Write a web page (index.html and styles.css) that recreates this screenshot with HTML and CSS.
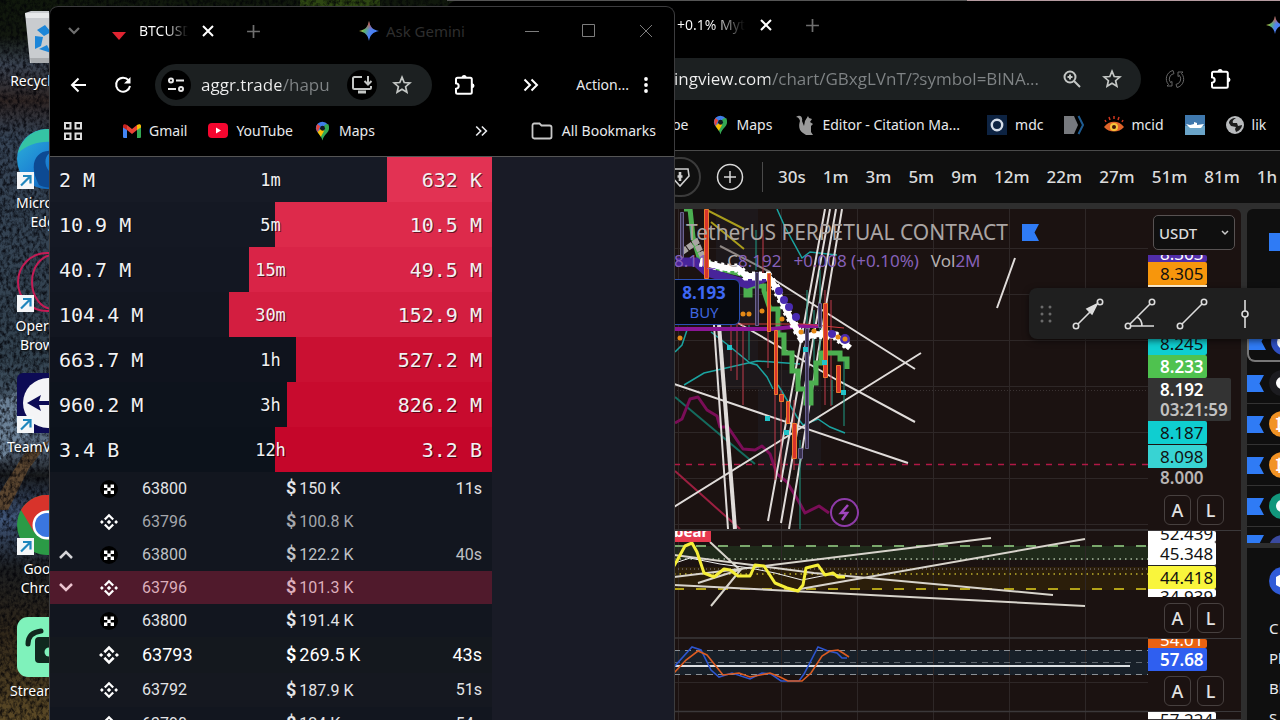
FILE: index.html
```html
<!DOCTYPE html>
<html lang="en">
<head>
<meta charset="utf-8">
<title>Desktop</title>
<link rel="stylesheet" href="styles.css">
</head>
<body>
<svg class="defs" aria-hidden="true">
  <defs>
    <linearGradient id="spark" x1="0" y1="0.3" x2="1" y2="0.6"><stop offset="0" stop-color="#f2c230"/><stop offset=".3" stop-color="#5cb46a"/><stop offset=".55" stop-color="#4f82f0"/><stop offset="1" stop-color="#3f7bf5"/></linearGradient>
    <linearGradient id="sparktop" x1="0" y1="0" x2="0" y2="1"><stop offset="0" stop-color="#f0453a"/><stop offset=".45" stop-color="#f0453a" stop-opacity="0"/></linearGradient>
    <linearGradient id="edge" x1="0" y1="0" x2="1" y2="1"><stop offset="0" stop-color="#2fb6d8"/><stop offset=".5" stop-color="#1c82d4"/><stop offset="1" stop-color="#0c4f9e"/></linearGradient>
    <symbol id="i-close" viewBox="0 0 14 14"><path d="M2 2l10 10M12 2L2 12" fill="none" stroke="currentColor" stroke-width="2"/></symbol>
    <symbol id="i-plus" viewBox="0 0 14 14"><path d="M7 1v12M1 7h12" fill="none" stroke="currentColor" stroke-width="1.600"/></symbol>
    <symbol id="i-more" viewBox="0 0 16 14"><path d="M1.500 1.500l5.500 5.500-5.500 5.500M8.500 1.500l5.500 5.500-5.500 5.500" fill="none" stroke="currentColor" stroke-width="2"/></symbol>
    <symbol id="i-star" viewBox="0 0 20 20"><path d="M10 2.200l2.200 5.300 5.700.5-4.300 3.700 1.300 5.600L10 14.300l-4.900 3 1.300-5.600L2.100 8l5.700-.5z" fill="none" stroke="currentColor" stroke-width="1.700"/></symbol>
    <symbol id="i-puzzle" viewBox="0 0 22 22"><path d="M2 5.200c0-1 .7-1.500 1.500-1.500H16.300c1 0 1.500.6 1.500 1.500V18.300c0 1-.6 1.500-1.500 1.500H3.500c-1 0-1.500-.6-1.500-1.500v-3.500c3.600-.5 3.600-5 0-5.500z" fill="none" stroke="currentColor" stroke-width="2"/><path d="M7.600 3.500a2.500 2.500 0 0 1 5 0zM18 9.200a2.500 2.500 0 0 1 0 5z" fill="currentColor"/></symbol>
    <symbol id="i-spark" viewBox="0 0 20 20"><path d="M10 0c1 6 4 9 10 10-6 1-9 4-10 10C9 14 6 11 0 10 6 9 9 6 10 0z" fill="url(#spark)"/><path d="M10 0c1 6 4 9 10 10-6 1-9 4-10 10C9 14 6 11 0 10 6 9 9 6 10 0z" fill="url(#sparktop)"/></symbol>
    <symbol id="i-maps" viewBox="0 0 16 20"><path d="M8 0a7 7 0 0 1 5.500 2.700L3 11.500A8 8 0 0 1 1 7 7 7 0 0 1 8 0z" fill="#3f7de8"/><path d="M2.600 2.500l3 2.500-2.900 6A8 8 0 0 1 2.600 2.500z" fill="#e8453a"/><path d="M3 11.500l8-8.500 3-.5a7 7 0 0 1 1 4.500c0 5-5.500 6-7 13-1-4-3-5.500-5-8.500z" fill="#34a853"/><path d="M2.700 11l4-4 3 3-3.500 6z" fill="#fbbc04"/><circle cx="8" cy="7" r="2.600" fill="#101820"/></symbol>
    <symbol id="i-short" viewBox="0 0 17 17"><path d="M0 0h17v17H0z" fill="#f4f6f8"/><path d="M4 13.500L12.500 5M6 4h7.500v7.500" fill="none" stroke="#1f86bd" stroke-width="2.200"/></symbol>
    <symbol id="i-okx" viewBox="0 0 18 18"><circle cx="9" cy="9" r="9" fill="#000"/><path d="M4 4.500h3.400v3.400H4zM10.600 4.500H14v3.400h-3.400zM7.300 7.500h3.400v3.400H7.300zM4 10.500h3.400v3.400H4zM10.600 10.500H14v3.400h-3.400z" fill="#fff"/></symbol>
    <symbol id="i-bnb" viewBox="0 0 18 18"><g fill="none" stroke="#fff" stroke-width="2.300"><path d="M4.800 6.500L9 2.300l4.200 4.200M4.800 11.500L9 15.700l4.200-4.200"/></g><path d="M9 6.800L11.200 9 9 11.200 6.800 9zM1.900 7.100L3.800 9l-1.900 1.900L0 9zM16.100 7.100L18 9l-1.900 1.900L14.200 9z" fill="#fff"/></symbol>
    <symbol id="i-flag" viewBox="0 0 17 17"><path d="M0 0h17l-4.500 8.500L17 17H0z" fill="#2f7bf5"/></symbol>
  </defs>
</svg>

<main class="desktop">
  <svg class="wallpaper" viewBox="0 0 1280 720" preserveAspectRatio="xMinYMin slice" aria-hidden="true">
    <defs>
      <linearGradient id="rock" x1="0" y1="0" x2="0" y2="1"><stop offset="0" stop-color="#10180c"/><stop offset=".05" stop-color="#12180f"/><stop offset=".09" stop-color="#3a4351"/><stop offset=".14" stop-color="#2e2422"/><stop offset=".19" stop-color="#364456"/><stop offset=".5" stop-color="#32424f"/><stop offset=".62" stop-color="#5f7288"/><stop offset=".66" stop-color="#181a1c"/><stop offset=".72" stop-color="#40567a"/><stop offset=".79" stop-color="#1c1e20"/><stop offset=".88" stop-color="#30271a"/><stop offset="1" stop-color="#5c4a26"/></linearGradient>
      <filter id="grain" x="0" y="0" width="100%" height="100%" color-interpolation-filters="sRGB"><feTurbulence type="fractalNoise" baseFrequency=".3 .22" numOctaves="4" seed="8"/><feColorMatrix values="0 0 0 0 0  0 0 0 0 0  0 0 0 0 0.020  2.400 0 0 0 -.9"/></filter>
    </defs>
    <path d="M0 0h700v720H0z" fill="url(#rock)"/>
    <path d="M300 0h80v8h-80z" fill="#2e4712"/>
    <path d="M0 400l50-25v40L0 460z" fill="#6c8298"/><path d="M50 440L28 470 8 510H0v-18l24-38z" fill="#5b4630"/>
    <path d="M0 0h700v720H0z" filter="url(#grain)" opacity=".75"/>
    <path d="M447 0h520v1H447z" fill="#555"/><path d="M967 0h313v1H967z" fill="#b59ba0"/>
  </svg>

  <section class="icons" aria-label="Desktop icons">
    <figure class="dicon bin"><svg width="60" height="60" viewBox="0 0 60 60"><path d="M8 3l6-2h36l2 2-6 50H13z" fill="#c9cccf"/><path d="M8 3h44l-1 5H9z" fill="#e7e9ea"/><path d="M13 48h33l-1 5H14z" fill="#a9acaf"/><path d="M20 20l8-5 6 7-7 4zM18 26l8 1-2 9-6 3zM22 39l8-4 4 8z" fill="#1d86d8"/></svg><figcaption>Recycle Bin</figcaption></figure>
    <figure class="dicon edge"><svg width="60" height="60" viewBox="0 0 60 60"><circle cx="30" cy="30" r="30" fill="url(#edge)"/><path d="M1 24C6 6 20 0 32 0c14 0 28 10 28 24-10-12-40-18-59 0z" fill="#35c3a4"/><path d="M22 56C10 34 20 20 36 22c-14 6-8 26 14 30-8 8-20 8-28 4z" fill="#0d4a93"/><use href="#i-short" y="43" width="17" height="17"/></svg><figcaption>Microsoft<br>Edge</figcaption></figure>
    <figure class="dicon opera"><svg width="60" height="60" viewBox="0 0 60 60"><g fill="none" stroke="#c41c55" stroke-width="2"><circle cx="30" cy="30" r="29"/><ellipse cx="36" cy="30" rx="21" ry="27"/></g><use href="#i-short" y="43" width="17" height="17"/></svg><figcaption>Opera GX<br>Browser</figcaption></figure>
    <figure class="dicon team"><svg width="60" height="60" viewBox="0 0 60 60"><rect width="60" height="60" rx="6" fill="#0d0b55"/><circle cx="31" cy="30" r="25" fill="#f4f4f6"/><path d="M10 30l14-8-2 6h18v4H22l2 6z" fill="#0d0b55"/><use href="#i-short" y="43" width="17" height="17"/></svg><figcaption>TeamViewer</figcaption></figure>
    <figure class="dicon chrome"><svg width="60" height="60" viewBox="0 0 60 60"><circle cx="30" cy="30" r="30" fill="#2b9a46"/><path d="M4 15A30 30 0 0 1 56 15H30L17 37z" fill="#d8332b"/><circle cx="30" cy="30" r="14.500" fill="#fff"/><circle cx="30" cy="30" r="12" fill="#3a76e0"/><use href="#i-short" y="43" width="17" height="17"/></svg><figcaption>Google<br>Chrome</figcaption></figure>
    <figure class="dicon stream"><svg width="60" height="60" viewBox="0 0 60 60"><rect width="60" height="60" rx="11" fill="#7ff2bb"/><path d="M11 27c0-8 5-12 13-13" fill="none" stroke="#10281f" stroke-width="5" stroke-linecap="round"/><rect x="18" y="20" width="34" height="26" rx="4" fill="#10281f"/><circle cx="32" cy="35" r="4.500" fill="#7ff2bb"/></svg><figcaption>Streamlabs</figcaption></figure>
  </section>

  <section class="win back" aria-label="Chart window">
    <header class="tabs">
      <div class="tab"><span class="tab-title">+0.1% Myt</span><button class="tbtn close" aria-label="Close tab"><svg width="14" height="14"><use href="#i-close"/></svg></button></div>
      <button class="tbtn new" aria-label="New tab"><svg width="15" height="15"><use href="#i-plus"/></svg></button>
      <span class="grow"></span>
      <svg class="edge-spark" width="18" height="18"><use href="#i-spark"/></svg>
    </header>
    <nav class="bar">
      <div class="pill">
        <input class="url long" aria-label="Address" value="ingview.com/chart/GBxgLVnT/?symbol=BINA...">
        <button class="ic" aria-label="Zoom"><svg width="20" height="20" viewBox="0 0 20 20" fill="none" stroke="#c4c7c5" stroke-width="2"><circle cx="8" cy="8" r="5.500"/><path d="M12 12l6 6M5.500 8h5M8 5.500v5"/></svg></button>
        <button class="ic" aria-label="Bookmark"><svg width="20" height="20"><use href="#i-star"/></svg></button>
      </div>
      <button class="xbtn dim" aria-label="Extension"><svg width="20" height="20" viewBox="0 0 20 20" fill="none" stroke="#666" stroke-width="1"><path d="M8 1.500A8.500 8.500 0 0 0 3.500 15.500L2 17h5v-4.500l-1.500 1A5.500 5.500 0 0 1 9 4.600zM12 18.500A8.500 8.500 0 0 0 16.500 4.500L18 3h-5v4.500l1.500-1A5.500 5.500 0 0 1 11 15.400z"/></svg></button>
      <button class="xbtn" aria-label="Extensions"><svg width="22" height="22"><use href="#i-puzzle"/></svg></button>
      <span class="tail"></span>
    </nav>
    <nav class="marks">
      <a href="#" class="mark m-be">be</a>
      <a href="#" class="mark m-maps"><svg width="15" height="20"><use href="#i-maps"/></svg>Maps</a>
      <a href="#" class="mark m-ed"><svg width="18" height="20" viewBox="0 0 18 20"><path d="M0 2c4-3 7 0 6 4l2 5 1-5 3-5 1 2 3 1-2 3 3 2-2 2v6l2 3h-7l-3-2C2 15 3 9 4 6 3 3 2 2 0 2z" fill="#9a9a9a"/></svg>Editor - Citation Ma...</a>
      <a href="#" class="mark m-mdc"><svg width="20" height="20" viewBox="0 0 20 20"><path d="M0 0h20v20H0z" fill="#0d2342"/><circle cx="10" cy="10" r="5.200" fill="none" stroke="#d5dde8" stroke-width="2.400"/></svg>mdc</a>
      <a href="#" class="mark m-dx" aria-label="Bookmark"><svg width="20" height="20" viewBox="0 0 20 20"><path d="M0 1h10l4 9-4 9H0z" fill="#77797e"/><path d="M14.500 1l4.500 9-4.500 9" fill="none" stroke="#1e5b91" stroke-width="2"/></svg></a>
      <a href="#" class="mark m-mcid"><svg width="20" height="20" viewBox="0 0 20 20"><path d="M0 12c5-7 15-7 20 0-5 6-15 6-20 0z" fill="#e0642a"/><circle cx="10" cy="12" r="4" fill="#f4c53a"/><circle cx="10" cy="12" r="2" fill="#3d1208"/><path d="M2 7L1 5M6 5L5 2M10 4V1M14 5l1-3M18 7l1-2" stroke="#d0361e" stroke-width="1.500"/></svg>mcid</a>
      <a href="#" class="mark m-ship" aria-label="Bookmark"><svg width="20" height="20" viewBox="0 0 20 20"><path d="M0 0h20v20H0z" fill="#3f78ad"/><path d="M0 11h20v9H0z" fill="#6aa4c8"/><path d="M1 9l4 1 4-1V7l3 1v2l7-1-3 4H5z" fill="#fff"/></svg></a>
      <a href="#" class="mark m-lik"><svg width="18" height="18" viewBox="0 0 18 18"><circle cx="9" cy="9" r="9" fill="#b9bbbd"/><path d="M10 2c-3 2-4 3-3 5h4l1 3 4-1c0 3-3 6-6 7l-1-3 1-2-5-1-2-3C3 4 6 2 10 2z" fill="#1b1b1b"/></svg>lik</a>
    </nav>
    <div class="intervals">
      <span class="ghost"><svg width="22" height="22" viewBox="0 0 22 22" fill="none" stroke="#cfcfcf" stroke-width="1.600"><path d="M3 3h16l1 7-9 10-9-10z"/><path d="M11 6v9M8.500 10.500h5" stroke-width="2.600"/></svg></span>
      <button class="add" aria-label="Compare symbol"><svg width="28" height="28" viewBox="0 0 28 28" fill="none" stroke="#d8d8d8" stroke-width="1.500"><circle cx="14" cy="14" r="12.500"/><path d="M14 8v12M8 14h12"/></svg></button>
      <span class="rule"></span>
      <button>30s</button><button>1m</button><button>3m</button><button>5m</button><button>9m</button><button>12m</button><button>22m</button><button>27m</button><button>51m</button><button>81m</button><button>1h</button>
    </div>
    <div class="workspace">
      <div class="chart">
        <svg class="plot" viewBox="674 209 474 511" preserveAspectRatio="xMinYMin slice" role="img" aria-label="Price chart">
          <path d="M674 209h474v511H674z" fill="#1b1211"/>
          <path d="M674 546h474v14H674z" fill="#1f2a1a"/><path d="M674 567h474v23H674z" fill="#2b1e0a"/><path d="M674 650h474v25H674z" fill="#182029"/>
          <path d="M716 209v180h42V209zM758 370h63v100h-63z" fill="#22252f" opacity=".35"/>
          <path d="M678.500 209v511M781.500 209v511M857.500 209v511M933.500 209v511M1009.500 209v511M1085.500 209v511M674 248.500h474M674 294.500h474M674 340.500h474M674 386.500h474M674 432.500h474M674 478.500h474M674 524.500h474M674 682.500h474" stroke="#2e2727" fill="none"/>
          <path d="M674 390.500h474" stroke="#3a3232" stroke-dasharray="1 2"/>
          <path d="M674 464.500h474" stroke="#b01846" stroke-width="1.500" stroke-dasharray="6 6"/>
          <g fill="none" stroke="#1ba3a0" stroke-width="1.500"><path d="M777 209l8 18 17 31 8-6 27 3M675 352l7-7 6-18M711 332l17 13 22 18 7 2 10 12 6 12M684 385l20-12 53-12 43 3M778 385l9 15 10 17 6 8 15-6 12 8 15 6"/><path d="M675 397l80 67" stroke="#146b5e" stroke-width="2"/></g>
          <path d="M675 471l65 58" stroke="#9c1f40" stroke-width="2"/>
          <path d="M675 423l7-4 8-20 8-2 9 13 10 6 3 11h8l15 22 12 1 7-4 8 8 7 20 10 8 12 20 6 11 14-7 10 7" fill="none" stroke="#7a0d57" stroke-width="3" stroke-linejoin="round"/>
          <path d="M705 209l39 20M711 222l33 27" stroke="#a99d1c" stroke-width="2"/><path d="M720 246l50 26" stroke="#8d8684" stroke-width="2"/>
          <g stroke="#e0dcda" stroke-width="2" fill="none">
            <path d="M770 277l145 92M921 353L674 507M674 384l234 79M738 323l99 57 78 42M825 209l-57 312M830 209l-49 273M836 209l-55 314M842 209l-53 320M714 325l14 204M1015 258l-18 50"/>
            <path d="M719 325l16 204" stroke-width="4"/>
          </g>
          <g stroke="#c23a4d" stroke-width="1"><path d="M731 325v46M737 325v55M743 325v80M768 325v43M775 330v150M781 390v90M825 290v115M831 300v106M763 230v60M794 400v70"/></g>
          <g stroke="#1f9c86" stroke-width="1"><path d="M749 325v35M756 230v40M807 290v150M800 440v89M844 358v68M832 380v25M814 310v60M820 270v80"/></g>
          <path d="M684 209h6l3 28 6 20 20 12 27 6v20h4v-9h14v5l6 18h8v26h6v18h8v18h6v18h8v14h5v-20h5v-20h5v-10h19v6h7v10" fill="none" stroke="#4caf50" stroke-width="5"/>
          <path d="M676 262l20 0 11 10 40 12 20-7" fill="none" stroke="#48249a" stroke-width="9"/>
          <path d="M674 329h98l30-3h20" fill="none" stroke="#8a1696" stroke-width="4"/><path d="M674 324h130l40 4" stroke="#d03b3f" fill="none"/>
          <path d="M682 252l14-10 10 22" fill="none" stroke="#aaa5a4" stroke-width="6" stroke-dasharray="6 1"/>
          <path d="M700 262l26 6h12l8 8h22l8 12 10 22 12 22 4 6 14-4 20 2 14 12" fill="none" stroke="#fff" stroke-width="6" stroke-linejoin="round"/><path d="M700 262l26 6h12l8 8h22l8 12 10 22 12 22 4 6 14-4 20 2 14 12" fill="none" stroke="#fff" stroke-width="9" stroke-dasharray="3 4"/>
          <g fill="#4a2bb0"><circle cx="779" cy="291" r="4"/><circle cx="784" cy="300" r="4"/><circle cx="789" cy="307" r="4"/><circle cx="796" cy="317" r="4"/><circle cx="832" cy="334" r="4"/><circle cx="845" cy="339" r="5"/></g>
          <g fill="#e68a16"><circle cx="749" cy="314" r="2.500"/><circle cx="743" cy="314" r="2.500"/><circle cx="762" cy="311" r="2.500"/><circle cx="782" cy="319" r="2.500"/><circle cx="801" cy="332" r="2.500"/><circle cx="814" cy="331" r="2.500"/><circle cx="838" cy="337" r="2.500"/><circle cx="845" cy="339" r="2.500"/><circle cx="680" cy="338" r="2.500"/></g>
          <g fill="#d8342d" stroke="#ed7a2d"><path d="M704.500 209.500h4v69h-4zM767.500 273.500h3v58h-3zM774.500 330.500h3v64h-3zM823.500 303.500h4v74h-4zM836.500 365.500h4v27h-4zM786.500 401.500h3v22h-3zM792.500 423.500h4v35h-4zM779.500 394.500h4v7h-4z"/></g>
          <g fill="#39304f" stroke="#6a6290"><path d="M805.500 328.500h3v120h-3zM755.500 272.500h3v53h-3zM818.500 303.500h3v24h-3zM798.500 448.500h4v10h-4zM680.500 212.500h3v45h-3z"/></g>
          <path d="M727 345h5v5h-5zM803 347h5v5h-5zM822 360h5v5h-5zM765 416h5v5h-5zM784 430h5v5h-5zM841 390h5v5h-5z" fill="#22c3c9"/>
          <circle cx="844.500" cy="512.500" r="13.500" fill="#1b1211" stroke="#8e3ba8" stroke-width="2"/><path d="M848 505l-7 8h6l-5 7" fill="none" stroke="#a045bd" stroke-width="2.500"/>
          <path d="M1148 457l9 7-9 7z" fill="#d0146a"/>
          <path d="M674 546h474" stroke="#7aa86c" stroke-width="2" stroke-dasharray="10 12"/>
          <path d="M674 559h474" stroke="#a9b8a0" stroke-width="1.500" stroke-dasharray="1.500 4"/><path d="M674 569h474" stroke="#8a8292" stroke-dasharray="1 3"/><path d="M674 574h474" stroke="#bdb02c" stroke-width="1.500" stroke-dasharray="1.500 4"/>
          <path d="M674 589h474" stroke="#b3a318" stroke-width="2" stroke-dasharray="10 12"/>
          <path d="M674 555l140 18 239 22M674 585l411 21M674 577l317-39M800 589l285-50M710 542l30 28M742 568l-31 38M698 583l44-14" fill="none" stroke="#d8d4cc" stroke-width="2"/>
          <path d="M675 563l15-5 30 6 30 4 25 5 27 7 25-5" fill="none" stroke="#eee"/>
          <path d="M674 566l11-20 7-3 5 9 7 21 10 4 10-8 6 1 8 6h12l5-11 9 1 11 17 12 5 11 3 5-6 3-17 12-3 7 10 8-2 5 4h7" fill="none" stroke="#f5ee38" stroke-width="3" stroke-linejoin="round"/>
          <path d="M674 531h37v11h-37z" fill="#e6394f"/>
          <g stroke="#8a9096" stroke-dasharray="6 5"><path d="M674 650.500h474M674 674.500h474"/><path d="M674 662.500h474" stroke="#5f666d"/></g>
          <path d="M674 666h456" stroke="#dcdfe2" stroke-width="2"/>
          <path d="M674 667l18-20 9 3 10 20 8 7 13-4 18 6 12-6 9 1 10 7h18l5-7 14-27 10 4 9 2 5 5h5" fill="none" stroke="#2d55cf" stroke-width="1.600"/><path d="M674 673l12-13 12-9 9 4 16 20 16-2 11 4 20-4 10 4 8 4h14l9-8 11-17 8-5 8-1 5 3 6 4" fill="none" stroke="#dc5c22" stroke-width="1.600"/>
          <path d="M674 530h474M674 638h474M674 711.500h474" stroke="#3b383a" stroke-width="1.500"/>
        </svg>
        <div class="legend"><div class="sym">TetherUS PERPETUAL CONTRACT <svg width="17" height="17"><use href="#i-flag" width="17" height="17"/></svg></div>
          <div class="vals"><span>8.11_</span><span><b>C</b>8.192</span><span>+0.008 (+0.10%)</span><span><b>Vol</b>2M</span></div></div>
        <button class="buy"><strong>8.193</strong>BUY</button>
        <span class="bear">bear</span>
        <label class="cur"><select aria-label="Currency"><option>USDT</option></select><svg width="8" height="6" viewBox="0 0 8 6"><path d="M1 1l3 3 3-3" fill="none" stroke="#ccc" stroke-width="1.500"/></svg></label>
        <div class="scale">
          <div class="pane p1">
            <span class="tag purple cut">8.363</span><span class="tag orange">8.305</span><span class="hidden-gap"></span>
            <span class="tag teal first">8.245</span><span class="tag green">8.233</span><span class="tag now">8.192<br><i>03:21:59</i></span><span class="tag teal">8.187</span><span class="tag teal2">8.098</span><span class="plain">8.000</span>
            <div class="al"><button>A</button><button>L</button></div>
          </div>
          <div class="pane p2">
            <span class="tag white wide cut">52.439</span><span class="tag white wide tall">45.348</span><span class="tag yellow wide">44.418</span><span class="tag white wide cuttop">34.939</span>
            <div class="al"><button>A</button><button>L</button></div>
          </div>
          <div class="pane p3">
            <span class="tag dorange cut">54.01</span><span class="tag blue">57.68</span>
            <div class="al"><button>A</button><button>L</button></div>
          </div>
          <div class="pane p4"><span class="tag white wide cuttop">57.224</span></div>
        </div>
      </div>
      <aside class="side">
        <div class="head"><svg width="18" height="18"><use href="#i-flag"/></svg></div>
        <ul class="watch">
          <li class="sel"><svg width="17" height="17"><use href="#i-flag"/></svg><i class="coin c1"></i></li>
          <li><svg width="17" height="17"><use href="#i-flag"/></svg><i class="coin c2"></i></li>
          <li><svg width="17" height="17"><use href="#i-flag"/></svg><i class="coin c3">₿</i></li>
          <li><svg width="17" height="17"><use href="#i-flag"/></svg><i class="coin c3">₿</i></li>
          <li><svg width="17" height="17"><use href="#i-flag"/></svg><i class="coin c4"></i></li>
          <li class="last"><svg width="17" height="17"><use href="#i-flag"/></svg><i class="coin c5"></i></li>
        </ul>
        <div class="detail"><svg width="28" height="28" viewBox="0 0 28 28"><circle cx="14" cy="14" r="14" fill="#2f5bd8"/><path d="M14 6l7 4v8l-7 4-7-4v-8z" fill="#fff"/></svg><span>C</span><span>Pl</span><span>Bl</span><span>S</span></div>
      </aside>
    </div>
    <div class="tools">
      <svg class="grip" width="12" height="18" viewBox="0 0 12 18" fill="#6a6a6a"><circle cx="2" cy="2" r="1.500"/><circle cx="10" cy="2" r="1.500"/><circle cx="2" cy="9" r="1.500"/><circle cx="10" cy="9" r="1.500"/><circle cx="2" cy="16" r="1.500"/><circle cx="10" cy="16" r="1.500"/></svg>
      <button aria-label="Arrow"><svg width="32" height="32" viewBox="0 0 32 32" fill="none" stroke="#dcdcdc" stroke-width="1.600"><circle cx="4" cy="28" r="2.700"/><circle cx="28" cy="4" r="2.700"/><path d="M6 26L20 12"/><path d="M15 11l10-5-5 10z" fill="#dcdcdc"/></svg></button>
      <button aria-label="Trend angle"><svg width="32" height="32" viewBox="0 0 32 32" fill="none" stroke="#dcdcdc" stroke-width="1.600"><circle cx="4" cy="28" r="2.700"/><circle cx="28" cy="4" r="2.700"/><path d="M6 26L26 6M7 28h23M13 19c4 2 5 5 5 9"/></svg></button>
      <button aria-label="Trend line"><svg width="32" height="32" viewBox="0 0 32 32" fill="none" stroke="#dcdcdc" stroke-width="1.600"><circle cx="4" cy="28" r="2.700"/><circle cx="28" cy="4" r="2.700"/><path d="M6 26L26 6"/></svg></button>
      <button aria-label="Vertical line"><svg width="32" height="32" viewBox="0 0 32 32" fill="none" stroke="#dcdcdc" stroke-width="1.600"><path d="M17 2v11M17 19v11"/><circle cx="17" cy="16" r="3"/></svg></button>
    </div>
  </section>

  <section class="win front" aria-label="Trades window">
    <header class="tabs">
      <button class="tbtn menu" aria-label="Search tabs"><svg width="12" height="8" viewBox="0 0 12 8"><path d="M1 1l5 5 5-5" fill="none" stroke="#6f6f6f" stroke-width="2.200"/></svg></button>
      <div class="tab"><svg class="fav" width="14" height="20" viewBox="0 0 14 20"><path d="M0 11h14l-7 8z" fill="#e02431"/></svg><span class="tab-title">BTCUSD</span><button class="tbtn close" aria-label="Close tab"><svg width="14" height="14"><use href="#i-close"/></svg></button></div>
      <button class="tbtn new" aria-label="New tab"><svg width="15" height="15"><use href="#i-plus"/></svg></button>
      <span class="grow"></span>
      <button class="gemini"><svg width="20" height="20"><use href="#i-spark"/></svg>Ask Gemini</button>
      <button class="wbtn" aria-label="Minimize"><svg width="14" height="14"><path d="M0 7.500h14" stroke="#7d7d7d"/></svg></button>
      <button class="wbtn" aria-label="Maximize"><svg width="14" height="14"><path d="M.5.5h12v12H.5z" fill="none" stroke="#7d7d7d"/></svg></button>
      <button class="wbtn" aria-label="Close"><svg width="14" height="14"><path d="M1 1l12 12M13 1L1 13" stroke="#7d7d7d"/></svg></button>
    </header>
    <nav class="bar">
      <button class="nbtn" aria-label="Back"><svg width="16" height="16" viewBox="0 0 16 16"><path d="M16 8H2M8.500 1.500L2 8l6.500 6.500" fill="none" stroke="#fff" stroke-width="2"/></svg></button>
      <button class="nbtn" aria-label="Reload"><svg width="18" height="18" viewBox="0 0 18 18"><path d="M14.500 4.200A7 7 0 1 0 16 10" fill="none" stroke="#fff" stroke-width="2"/><path d="M16.500 1v6.500H10z" fill="#fff"/></svg></button>
      <div class="pill">
        <button class="round" aria-label="Site information"><svg width="18" height="16" viewBox="0 0 18 16" fill="none" stroke="#e8e8e8" stroke-width="2"><circle cx="4" cy="3.500" r="2"/><path d="M9 3.500h8M1 12h8"/><circle cx="14" cy="12" r="2"/></svg></button>
        <input class="url short" aria-label="Address" value="aggr.trade/hapu">
        <button class="round" aria-label="Install app"><svg width="22" height="20" viewBox="0 0 22 20" fill="none" stroke="#c4c7c5" stroke-width="2"><path d="M11 2H3.500C2.500 2 2 2.600 2 3.500v9c0 1 .5 1.500 1.500 1.500h15c1 0 1.500-.5 1.500-1.500V11M17 1v8M13.500 6l3.500 3.500L20.500 6"/><path d="M7 17h8" stroke-width="3"/></svg></button>
        <button class="ic" aria-label="Bookmark"><svg width="20" height="20"><use href="#i-star"/></svg></button>
      </div>
      <button class="xbtn" aria-label="Extensions"><svg width="22" height="22"><use href="#i-puzzle"/></svg></button>
      <button class="xbtn" aria-label="More"><svg width="16" height="14"><use href="#i-more"/></svg></button>
      <button class="act">Action...<svg width="4" height="16" viewBox="0 0 4 16" fill="#fff"><circle cx="2" cy="2" r="1.900"/><circle cx="2" cy="8" r="1.900"/><circle cx="2" cy="14" r="1.900"/></svg></button>
    </nav>
    <nav class="marks">
      <button class="apps" aria-label="Apps"><svg width="18" height="18" viewBox="0 0 18 18" fill="none" stroke="#ddd" stroke-width="2"><path d="M1 1h5.500v5.500H1zM11.500 1H17v5.500h-5.500zM1 11.500h5.500V17H1zM11.500 11.500H17V17h-5.500z"/></svg></button>
      <a href="#" class="mark m-gmail"><svg width="18" height="14" viewBox="0 0 18 14"><path d="M0 2h4v12H1.500C.5 14 0 13.500 0 12.500z" fill="#4285f4"/><path d="M14 2h4v10.500c0 1-.5 1.500-1.500 1.500H14z" fill="#34a853"/><path d="M4 1l5 4 5-4v5L9 10 4 6z" fill="#ea4335"/><path d="M0 2c0-2 2-2.500 4-1v5L0 3.500z" fill="#c5221f"/><path d="M18 2c0-2-2-2.500-4-1v5l4-2.500z" fill="#fbbc04"/></svg>Gmail</a>
      <a href="#" class="mark m-yt"><svg width="20" height="15" viewBox="0 0 20 15"><rect width="20" height="15" rx="4" fill="#f5062f"/><path d="M8 4.500l5 3-5 3z" fill="#fff"/></svg>YouTube</a>
      <a href="#" class="mark m-maps"><svg width="15" height="20"><use href="#i-maps"/></svg>Maps</a>
      <span class="grow"></span>
      <button class="over" aria-label="More bookmarks"><svg width="13" height="12"><use href="#i-more"/></svg></button>
      <a href="#" class="mark m-all"><svg width="22" height="18" viewBox="0 0 22 18"><path d="M1.500 14.500v-11c0-1.300.6-2 1.700-2h5.300l2 2h8c1.300 0 2 .6 2 1.700v9.600c0 1-.7 1.700-1.700 1.700H3.200c-1 0-1.700-.7-1.700-2z" fill="none" stroke="#c8c8c8" stroke-width="1.800"/></svg>All Bookmarks</a>
    </nav>
    <div class="page">
      <div class="feed">
        <div class="stats">
          <div class="stat s1"><span>2 M</span><em>1m</em><span>632 K</span></div>
          <div class="stat s2"><span>10.9 M</span><em>5m</em><span>10.5 M</span></div>
          <div class="stat s3"><span>40.7 M</span><em>15m</em><span>49.5 M</span></div>
          <div class="stat s4"><span>104.4 M</span><em>30m</em><span>152.9 M</span></div>
          <div class="stat s5"><span>663.7 M</span><em>1h</em><span>527.2 M</span></div>
          <div class="stat s6"><span>960.2 M</span><em>3h</em><span>826.2 M</span></div>
          <div class="stat s7"><span>3.4 B</span><em>12h</em><span>3.2 B</span></div>
        </div>
        <table class="trades">
          <tr><td></td><td><svg width="18" height="18"><use href="#i-okx"/></svg></td><td>63800</td><td><b>$</b>150 K</td><td>11s</td></tr>
          <tr class="mute"><td></td><td><svg width="18" height="18"><use href="#i-bnb"/></svg></td><td>63796</td><td><b>$</b>100.8 K</td><td></td></tr>
          <tr class="mid"><td><svg width="14" height="9" viewBox="0 0 14 9"><path d="M1 8l6-6 6 6" fill="none" stroke="#d5d5d8" stroke-width="2.500"/></svg></td><td><svg width="18" height="18"><use href="#i-okx"/></svg></td><td>63800</td><td><b>$</b>122.2 K</td><td>40s</td></tr>
          <tr class="sell"><td><svg width="14" height="9" viewBox="0 0 14 9"><path d="M1 1l6 6 6-6" fill="none" stroke="#ecc4d0" stroke-width="2.500"/></svg></td><td><svg width="18" height="18"><use href="#i-bnb"/></svg></td><td>63796</td><td><b>$</b>101.3 K</td><td></td></tr>
          <tr><td></td><td><svg width="18" height="18"><use href="#i-okx"/></svg></td><td>63800</td><td><b>$</b>191.4 K</td><td></td></tr>
          <tr class="big"><td></td><td><svg width="20" height="20"><use href="#i-bnb"/></svg></td><td>63793</td><td><b>$</b>269.5 K</td><td>43s</td></tr>
          <tr class="med"><td></td><td><svg width="18" height="18"><use href="#i-bnb"/></svg></td><td>63792</td><td><b>$</b>187.9 K</td><td>51s</td></tr>
          <tr><td></td><td><svg width="18" height="18"><use href="#i-bnb"/></svg></td><td>63790</td><td><b>$</b>124 K</td><td>54s</td></tr>
        </table>
      </div>
    </div>
  </section>
</main>
</body>
</html>
```
FILE: styles.css
```css
* { box-sizing: border-box; }
body { margin: 0; background: #000; color: #e8eaed; font: 14px/20px "Noto Sans", "Open Sans", sans-serif; }
button { border: 0; padding: 0; background: none; color: inherit; font: inherit; display: inline-flex; align-items: center; justify-content: center; flex: none; }
svg { display: block; flex: none; }
a { color: inherit; text-decoration: none; }
.defs { position: absolute; width: 0; height: 0; }
.grow { flex: 1; }

.desktop { position: relative; height: 100vh; overflow: hidden; }
.wallpaper { position: absolute; inset: 0; width: 100%; height: 100%; }
.icons { position: absolute; left: 0; top: 0; bottom: 0; width: 49px; overflow: hidden; }
.dicon { position: absolute; left: 0; width: 94px; margin: 0; text-align: center; color: #fff; line-height: 19px; text-shadow: 1px 1px 2px #000; }
.dicon svg { margin: 0 auto 4px; }
.bin { top: 10px; }
.bin figcaption { margin-top: -3px; }
.edge { top: 129px; }
.opera { top: 252px; }
.team { top: 373px; }
.chrome { top: 495px; }
.stream { top: 617px; }

.win { position: absolute; bottom: 0; display: flex; flex-direction: column; background: #000; overflow: hidden; }
.front { left: 49px; top: 6px; width: 626px; border: 1px solid #3c3c3e; border-bottom: 0; border-radius: 9px 9px 0 0; }
.back { left: 447px; top: 1px; right: 0; border-radius: 9px 0 0 0; }
.tabs, .bar, .marks { display: flex; align-items: center; flex: none; }
.tabs { height: 48px; }
.back .tabs { padding-left: 230px; }
.tab { display: flex; align-items: center; }
.tab-title { overflow: hidden; white-space: nowrap; background: linear-gradient(90deg, #fff 55%, #000 100%); background-clip: text; color: transparent; }
.front .tab-title { width: 49px; }
.back .tab-title { width: 68px; }
.fav { margin: 0 13px 0 14px; }
.tbtn { height: 32px; color: #6f6f6f; }
.menu { width: 48px; }
.close { width: 40px; color: #fff; }
.new { width: 50px; }
.back .close { width: 42px; }
.edge-spark { margin-right: -4px; }
.gemini { gap: 7px; margin-right: 38px; color: #2e2e2e; font-size: 15px; }
.wbtn { width: 57px; height: 32px; }

.bar { height: 60px; }
.front .bar { padding-left: 5px; }
.nbtn { width: 45px; height: 40px; }
.pill { flex: 1; min-width: 0; height: 42px; display: flex; align-items: center; background: #1c2021; }
.front .pill { margin-left: 10px; padding: 0 10px 0 6px; border-radius: 21px; }
.back .pill { margin-left: 227px; padding-right: 9px; border-radius: 0 21px 21px 0; }
.url { flex: 1; min-width: 0; border: 0; padding: 0; outline: 0; font: 17px/24px "Open Sans", sans-serif; color: transparent; background-clip: text; }
.short { margin-left: 10px; background-image: linear-gradient(90deg, #f0f0f0 80px, #808486 80px); }
.long { background-image: linear-gradient(90deg, #f0f0f0 96px, #808486 96px); }
.round { width: 30px; height: 30px; border-radius: 15px; background: #000; }
.ic { width: 40px; height: 36px; color: #c4c7c5; }
.front .ic { margin-left: 5px; }
.xbtn { width: 66px; height: 40px; color: #fff; }
.act { width: 110px; height: 40px; gap: 15px; padding-right: 26px; justify-content: flex-end; }
.back .xbtn { width: 46px; }
.back .dim { margin-left: 11px; }
.tail { width: 36px; }

.marks { white-space: nowrap; padding-bottom: 10px; height: 42px; }
.front .marks { padding-left: 14px; padding-right: 18px; border-bottom: 1px solid #555; }
.back .marks { padding-left: 225px; border-bottom: 1px solid #4a4a4a; }
.mark { display: flex; align-items: center; flex: none; gap: 8px; }
.m-gmail { margin-left: 41px; }
.m-yt { margin-left: 21px; }
.m-maps { margin-left: 22px; gap: 9px; }
.over { width: 20px; margin-right: 39px; }
.m-all { gap: 9px; }
.back .m-maps { margin-left: 24px; }
.m-ed { margin-left: 24px; }
.m-mdc { margin-left: 27px; }
.m-dx, .m-mcid { margin-left: 20px; }
.m-ship, .m-lik { margin-left: 21px; }

.page { flex: 1; min-height: 0; background: #191b26; overflow: hidden; }
.feed { width: 442px; background: #12161f; }
.stats { display: grid; grid-template-rows: repeat(7, 45px); color: #f1f1f3; font: 20px/46px "DejaVu Sans Mono", monospace; }
.stat { display: grid; grid-template-columns: 1fr 60px 1fr; padding: 0 10px 0 9px; text-shadow: 1px 1px 0 #0008; background-repeat: no-repeat; background-position: right; }
.stat span:last-child { text-align: right; }
.stat em { font-style: normal; font-size: 17px; text-align: center; }
.s1 { background-color: #161a25; background-image: linear-gradient(#e23253, #e23253); background-size: 105px 100%; }
.s2 { background-color: #141823; background-image: linear-gradient(#dd2a4b, #dd2a4b); background-size: 217px 100%; }
.s3 { background-color: #131722; background-image: linear-gradient(#d92447, #d92447); background-size: 243px 100%; }
.s4 { background-color: #121620; background-image: linear-gradient(#d31e40, #d31e40); background-size: 263px 100%; }
.s5 { background-color: #0f131d; background-image: linear-gradient(#ca1032, #ca1032); background-size: 196px 100%; }
.s6 { background-color: #0d131c; background-image: linear-gradient(#c80b2e, #c80b2e); background-size: 205px 100%; }
.s7 { background-color: #0c121b; background-image: linear-gradient(#c5062a, #c5062a); background-size: 217px 100%; }
.trades { width: 100%; border-collapse: collapse; table-layout: fixed; font: 16px/20px Roboto, sans-serif; color: #e3e4e7; }
.trades td { height: 33px; padding: 0; white-space: nowrap; }
.trades td:nth-child(1) { width: 32px; padding-left: 9px; }
.trades td:nth-child(2) { width: 54px; }
.trades td:nth-child(2) svg { margin: 0 auto; }
.trades td:nth-child(3) { width: 150px; padding-left: 6px; }
.trades td:nth-child(5) { text-align: right; padding-right: 10px; }
.trades b { margin-right: 3px; font-size: 18px; }
.trades .mute { color: #a4a7ac; }
.trades .mid { color: #bfc1c5; }
.trades .sell { background: #501a2c; color: #dcaebb; }
.trades .big { font-size: 18px; background: #14181e; color: #fff; }
.trades .big td { height: 36px; }
.trades .med td { height: 34px; }
.trades .med { background: #151820; }

.intervals { display: flex; align-items: center; flex: none; height: 58px; padding-left: 212px; gap: 17px; background: #0f0f0f; border-bottom: 6px solid #2e2e2e; color: #dbdbdb; font: 500 17px/24px "Noto Sans", sans-serif; }
.ghost { display: grid; place-items: center; width: 42px; height: 40px; border: 2px solid #3b3b3b; border-radius: 20px; flex: none; }
.add { margin-left: -2px; }
.rule { width: 1px; height: 30px; margin: 0 -2px 0 1px; background: #4a4a4a; }
.workspace { flex: 1; min-height: 0; display: flex; padding-left: 227px; background: #2e2e2e; }
.chart { position: relative; flex: 1; display: flex; min-width: 0; background: #1b1211; border-radius: 0 6px 0 0; overflow: hidden; }
.plot { flex: 1; min-width: 0; height: 511px; }
.legend { position: absolute; left: 12px; top: 8px; color: #aaa5a4; white-space: nowrap; }
.sym { display: flex; align-items: center; gap: 14px; font-size: 21px; line-height: 30px; }
.vals { display: flex; gap: 12px; margin-left: -12px; font-size: 17px; line-height: 28px; color: #8661b8; }
.vals b { font-weight: 400; color: #b5b0b0; }
.buy { position: absolute; left: -6px; top: 70px; width: 72px; height: 46px; display: flex; flex-direction: column; border: 1px solid #2b50b5; border-radius: 6px; background: #06090f; color: #3f65dd; font-size: 15px; line-height: 18px; }
.buy strong { font-size: 17px; line-height: 20px; color: #3e68f4; }
.bear { position: absolute; left: 0; top: 322px; height: 10px; overflow: hidden; line-height: 1px; font-weight: 700; font-size: 15px; color: #fff; }
.cur { position: absolute; right: 6px; top: 6px; width: 82px; height: 35px; display: flex; align-items: center; padding: 0 5px; border: 1px solid #575252; border-radius: 5px; background: #0f0f0f; }
.cur select { appearance: none; flex: 1; min-width: 0; border: 0; padding: 0; background: none; color: #dbdbdb; font: 500 15px/20px "Noto Sans", sans-serif; }
.scale { width: 93px; flex: none; display: grid; grid-template-rows: 322px 108px 73px 1fr; font: 17px/23px "Noto Sans", sans-serif; }
.pane { display: flex; flex-direction: column; align-items: flex-start; border-bottom: 1px solid #3b383a; min-height: 0; overflow: hidden; }
.p1 { padding-top: 46px; }
.tag { width: 59px; height: 23px; flex: none; padding-left: 12px; border-radius: 0 2px 2px 0; color: #111; white-space: nowrap; overflow: hidden; }
.wide { width: 68px; }
.cut { display: flex; align-items: flex-end; height: 7px; line-height: 17px; }
.cuttop { height: 8px; line-height: 16px; }
.purple { background: #512da8; color: #fff; }
.orange { background: #f7960c; }
.teal { background: #0fced0; }
.teal2 { background: #38d3d3; margin-top: 1px; }
.green { background: #4fc24f; color: #fff; font-weight: 600; }
.now { width: 83px; height: 43px; padding-top: 2px; line-height: 20px; background: #333; color: #fff; font-weight: 600; }
.now i { font-style: normal; color: #c2c2c2; }
.hidden-gap { height: 47px; width: 59px; flex: none; background: linear-gradient(#fff3d8 2px, transparent 2px); }
.plain { padding-left: 12px; height: 20px; line-height: 20px; color: #b8b4b4; font-weight: 600; }
.white { background: #fff; }
.tall { height: 24px; border-bottom: 1px solid #222; }
.p2 .cut { height: 11px; }
.yellow { background: #f9f53c; }
.dorange { background: #ea6212; color: #fff; }
.p3 .cut { height: 9px; }
.blue { background: #2f5ff0; color: #fff; font-weight: 600; }
.al { display: flex; gap: 6px; margin: auto 0 5px 16px; }
.al button { width: 27px; height: 30px; border: 1px solid #47403f; border-radius: 6px; color: #e2e2e2; font-weight: 500; font-size: 18px; }

.side { width: 33px; margin-left: 6px; flex: none; display: flex; flex-direction: column; background: #0f0f0f; border-radius: 6px 0 0 0; overflow: hidden; }
.head { height: 112px; padding: 24px 0 0 22px; }
.watch { list-style: none; margin: 0; padding: 0; }
.watch li { display: flex; align-items: center; gap: 5px; height: 41px; border-bottom: 1px solid #333; }
.watch .sel { height: 41px; border: 2px solid #777; border-right: 0; border-radius: 0 0 0 8px; margin-bottom: 1px; }
.watch .last { height: 21px; overflow: hidden; align-items: flex-start; padding-top: 8px; border-bottom: 5px solid #2e2e2e; }
.head, .watch, .detail { flex: none; }
.watch { padding-top: 0; }
.coin { width: 26px; height: 26px; flex: none; border-radius: 13px; color: #fff; font: 700 17px/26px "DejaVu Sans", sans-serif; text-align: center; }
.c1 { background: #fff; border: 6px solid #2f4fc0; }
.c2 { background: #fff; border: 7px solid #1c1c20; }
.c3 { background: #f29324; }
.c4 { background: #fff; border: 7px solid #12977c; }
.c5 { background: #3a4aa0; }
.detail { display: flex; flex-direction: column; padding: 19px 0 0 22px; font-size: 15px; line-height: 30px; white-space: nowrap; }
.detail svg { margin-bottom: 18px; }
.tools { position: absolute; left: 582px; right: 0; top: 287px; height: 51px; display: flex; align-items: center; gap: 20px; padding-left: 11px; background: #1f1f1f; border-radius: 8px 0 0 8px; overflow: hidden; box-shadow: 0 2px 6px #0008; }
```
